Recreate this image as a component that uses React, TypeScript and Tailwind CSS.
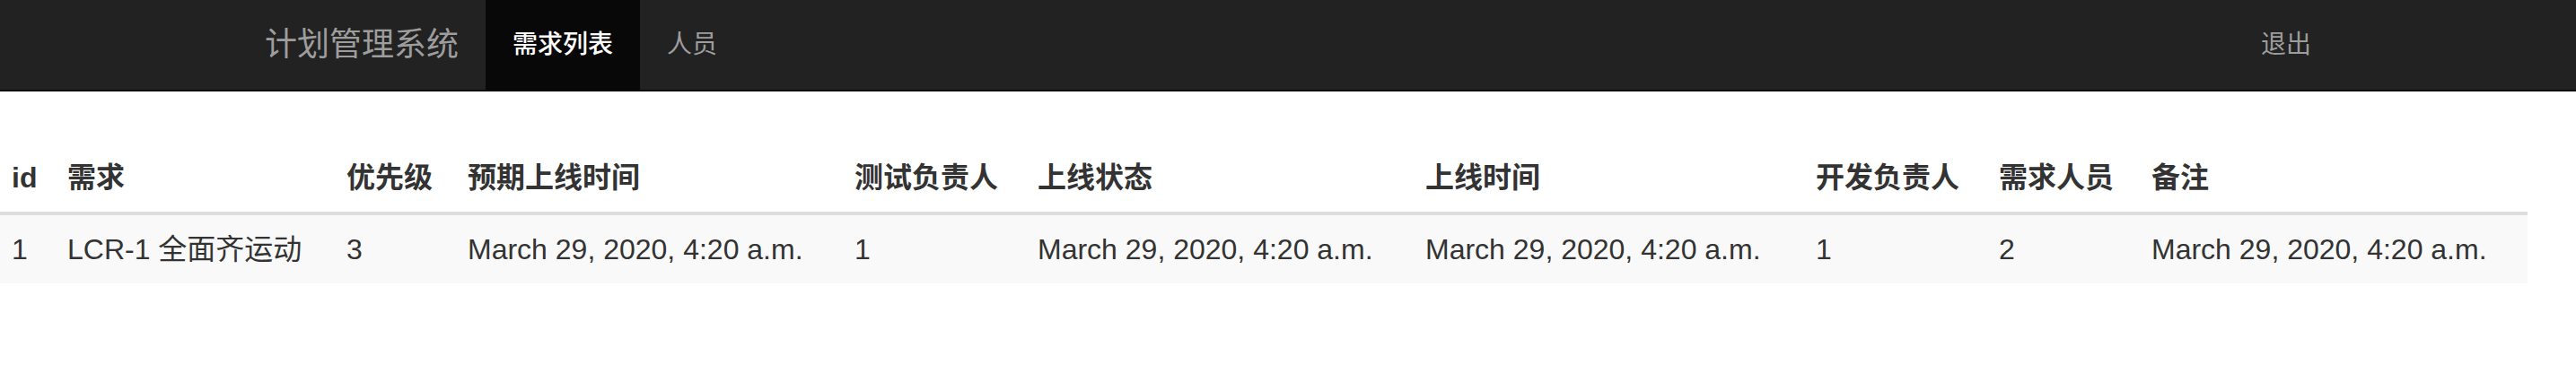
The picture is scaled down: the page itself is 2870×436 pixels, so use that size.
// 计划管理系统 — 需求列表 page: dark top navbar plus a striped table.
const font = 'font-["Liberation_Sans","Noto_Sans_CJK_SC",sans-serif]';

const columns: { label: string; width: string }[] = [
  { label: 'id', width: 'w-[62px]' },
  { label: '需求', width: 'w-[311px]' },
  { label: '优先级', width: 'w-[135px]' },
  { label: '预期上线时间', width: 'w-[431px]' },
  { label: '测试负责人', width: 'w-[204px]' },
  { label: '上线状态', width: 'w-[432px]' },
  { label: '上线时间', width: 'w-[435px]' },
  { label: '开发负责人', width: 'w-[204px]' },
  { label: '需求人员', width: 'w-[170px]' },
  { label: '备注', width: 'w-[432px]' },
];

const rows: string[][] = [
  [
    '1',
    'LCR-1 全面齐运动',
    '3',
    'March 29, 2020, 4:20 a.m.',
    '1',
    'March 29, 2020, 4:20 a.m.',
    'March 29, 2020, 4:20 a.m.',
    '1',
    '2',
    'March 29, 2020, 4:20 a.m.',
  ],
];

function Navbar() {
  return (
    <nav className="h-[102px] bg-[#222222] border-b-2 border-[#080808]">
      <div className="mx-auto flex h-[100px] w-[2340px] items-stretch">
        <a className="px-[30px] py-[30px] text-[36px] leading-[40px] text-[#9d9d9d]">
          计划管理系统
        </a>
        <a className="bg-[#080808] px-[30px] py-[30px] text-[28px] font-medium leading-[40px] text-white">
          需求列表
        </a>
        <a className="px-[30px] py-[30px] text-[28px] leading-[40px] text-[#9d9d9d]">
          人员
        </a>
        <a className="ml-auto px-[30px] py-[30px] text-[28px] leading-[40px] text-[#9d9d9d]">
          退出
        </a>
      </div>
    </nav>
  );
}

export default function App() {
  return (
    <div className={`${font} min-h-[436px] bg-white text-[#333333]`}>
      <Navbar />

      <table className="mt-[58px] w-[2816px] table-fixed border-collapse text-[32px] leading-[44px]">
        <thead>
          <tr>
            {columns.map((c) => (
              <th
                key={c.label}
                className={`${c.width} border-b-4 border-[#dddddd] pl-[13px] pr-[15px] py-[16px] text-left font-bold`}
              >
                {c.label}
              </th>
            ))}
          </tr>
        </thead>
        <tbody>
          {rows.map((row, i) => (
            <tr key={i} className="bg-[#f9f9f9]">
              {row.map((cell, j) => (
                <td key={j} className="whitespace-nowrap pl-[13px] pr-[15px] py-[16px]">
                  {cell}
                </td>
              ))}
            </tr>
          ))}
        </tbody>
      </table>
    </div>
  );
}
